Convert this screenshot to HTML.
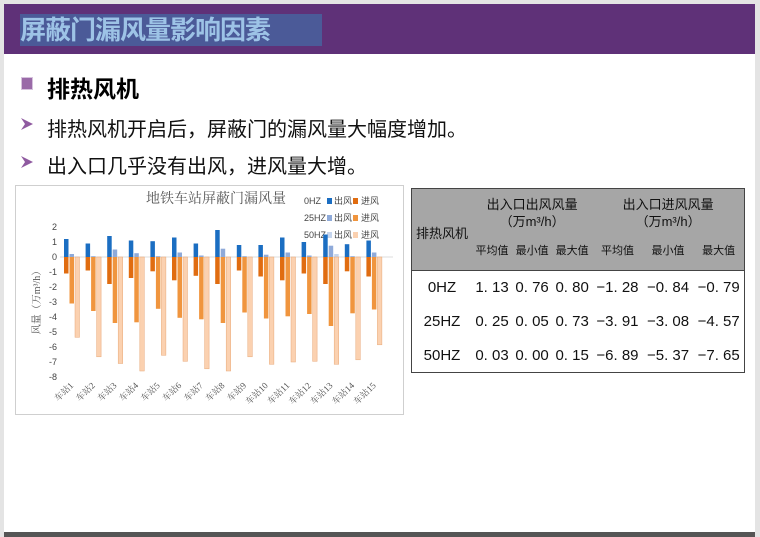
<!DOCTYPE html>
<html><head><meta charset="utf-8"><style>
body{margin:0;width:760px;height:537px;background:#e4e4e4;position:relative;overflow:hidden;font-family:"Liberation Sans","Noto Sans CJK SC",sans-serif}
.slide{position:absolute;left:4px;top:4px;width:751px;height:533px;background:#fff}
.hdr{position:absolute;left:4px;top:4px;width:751px;height:50px;background:#5f3178}
.ttl{position:absolute;left:20px;top:14px;width:302px;height:32px;background:#4b5a98;color:#9dc3e6;font-size:26px;font-weight:bold;line-height:32px;letter-spacing:-1px;white-space:nowrap}
.bar{position:absolute;left:4px;top:532px;width:751px;height:5px;background:#555}
.t{position:absolute;white-space:nowrap;color:#111}
table{position:absolute;left:411px;top:188px;width:334px;height:184px;border-collapse:collapse;border:1.5px solid #444;font-family:"Liberation Sans","Noto Sans CJK SC",sans-serif}
td{text-align:center;padding:0;white-space:nowrap;color:#111}
</style></head><body>
<div class="slide"></div>
<div class="hdr"></div>
<div class="ttl">屏蔽门漏风量影响因素</div>
<div class="bar"></div>
<div style="position:absolute;left:21px;top:77px;width:10px;height:11px;background:#9a6aa8;border:1.5px solid #d6c3dd"></div>
<div class="t" style="left:47px;top:70px;font-size:23px;font-weight:bold;color:#000">排热风机</div>
<svg style="position:absolute;left:20px;top:116px" width="14" height="16"><path d="M1 2 L13 8 L1 14 L5 8 Z" fill="#8f5aa0"/></svg>
<div class="t" style="left:47px;top:113px;font-size:20px">排热风机开启后，屏蔽门的漏风量大幅度增加。</div>
<svg style="position:absolute;left:20px;top:154px" width="14" height="16"><path d="M1 2 L13 8 L1 14 L5 8 Z" fill="#8f5aa0"/></svg>
<div class="t" style="left:47px;top:150px;font-size:20px">出入口几乎没有出风，进风量大增。</div>

<svg style="position:absolute;left:0;top:0" width="760" height="537" font-family="Liberation Serif,Noto Serif CJK SC,serif">
<rect x="15.5" y="185.5" width="388" height="229" fill="#fff" stroke="#cfcfcf"/>
<text x="216" y="203" font-size="14" text-anchor="middle" fill="#555">地铁车站屏蔽门漏风量</text>
<g font-size="9" fill="#444" font-family="Liberation Sans,Noto Sans CJK SC,sans-serif">
<text x="304" y="204">0HZ</text><rect x="327" y="198" width="5" height="6" fill="#1b6ec2"/><text x="334" y="204">出风</text><rect x="353" y="198" width="5" height="6" fill="#e06c10"/><text x="361" y="204">进风</text>
<text x="304" y="221">25HZ</text><rect x="327" y="215" width="5" height="6" fill="#8faad9"/><text x="334" y="221">出风</text><rect x="353" y="215" width="5" height="6" fill="#f0953e"/><text x="361" y="221">进风</text>
<text x="304" y="238">50HZ</text><rect x="327" y="232" width="5" height="6" fill="#c5d5ee"/><text x="334" y="238">出风</text><rect x="353" y="232" width="5" height="6" fill="#fbd1b0"/><text x="361" y="238">进风</text>
</g>
<g font-size="9" fill="#444" text-anchor="end" font-family="Liberation Sans,sans-serif">
<text x="57" y="230">2</text><text x="57" y="245">1</text><text x="57" y="260">0</text><text x="57" y="275">-1</text><text x="57" y="290">-2</text><text x="57" y="305">-3</text><text x="57" y="320">-4</text><text x="57" y="335">-5</text><text x="57" y="350">-6</text><text x="57" y="365">-7</text><text x="57" y="380">-8</text>
</g>
<text transform="translate(40,300) rotate(-90)" font-size="10" fill="#555" text-anchor="middle">风量（万m³/h）</text>
<line x1="60" y1="257" x2="393" y2="257" stroke="#ddd"/>
<g id="bars">
<g transform="translate(64,0)"><rect x="0" y="239" width="4.5" height="18" fill="#1b6ec2"/><rect x="0" y="257" width="4.5" height="16.5" fill="#e06c10"/><rect x="5.5" y="254" width="4.5" height="3" fill="#8faad9"/><rect x="5.5" y="257" width="4.5" height="46.5" fill="#f0953e"/><rect x="11" y="256.5" width="4.5" height="0.5" fill="#c5d5ee"/><rect x="11" y="257" width="4.5" height="80.3" fill="#fbd1b0" stroke="#e8a878" stroke-width=".5"/></g>
<g transform="translate(85.6,0)"><rect x="0" y="243.5" width="4.5" height="13.5" fill="#1b6ec2"/><rect x="0" y="257" width="4.5" height="13.5" fill="#e06c10"/><rect x="5.5" y="256.2" width="4.5" height="0.8" fill="#8faad9"/><rect x="5.5" y="257" width="4.5" height="54" fill="#f0953e"/><rect x="11" y="257" width="4.5" height="99.8" fill="#fbd1b0" stroke="#e8a878" stroke-width=".5"/></g>
<g transform="translate(107.2,0)"><rect x="0" y="236" width="4.5" height="21" fill="#1b6ec2"/><rect x="0" y="257" width="4.5" height="27" fill="#e06c10"/><rect x="5.5" y="249.5" width="4.5" height="7.5" fill="#8faad9"/><rect x="5.5" y="257" width="4.5" height="66" fill="#f0953e"/><rect x="11" y="257" width="4.5" height="106.5" fill="#fbd1b0" stroke="#e8a878" stroke-width=".5"/></g>
<g transform="translate(128.8,0)"><rect x="0" y="240.5" width="4.5" height="16.5" fill="#1b6ec2"/><rect x="0" y="257" width="4.5" height="21" fill="#e06c10"/><rect x="5.5" y="253.2" width="4.5" height="3.8" fill="#8faad9"/><rect x="5.5" y="257" width="4.5" height="65.3" fill="#f0953e"/><rect x="11" y="257" width="4.5" height="114" fill="#fbd1b0" stroke="#e8a878" stroke-width=".5"/></g>
<g transform="translate(150.4,0)"><rect x="0" y="241.2" width="4.5" height="15.8" fill="#1b6ec2"/><rect x="0" y="257" width="4.5" height="14.3" fill="#e06c10"/><rect x="5.5" y="256.2" width="4.5" height="0.8" fill="#8faad9"/><rect x="5.5" y="257" width="4.5" height="51.8" fill="#f0953e"/><rect x="11" y="257" width="4.5" height="98.3" fill="#fbd1b0" stroke="#e8a878" stroke-width=".5"/></g>
<g transform="translate(172,0)"><rect x="0" y="237.5" width="4.5" height="19.5" fill="#1b6ec2"/><rect x="0" y="257" width="4.5" height="23.3" fill="#e06c10"/><rect x="5.5" y="252.5" width="4.5" height="4.5" fill="#8faad9"/><rect x="5.5" y="257" width="4.5" height="60.8" fill="#f0953e"/><rect x="11" y="257" width="4.5" height="104.3" fill="#fbd1b0" stroke="#e8a878" stroke-width=".5"/></g>
<g transform="translate(193.6,0)"><rect x="0" y="243.5" width="4.5" height="13.5" fill="#1b6ec2"/><rect x="0" y="257" width="4.5" height="18.8" fill="#e06c10"/><rect x="5.5" y="255.5" width="4.5" height="1.5" fill="#8faad9"/><rect x="5.5" y="257" width="4.5" height="62.3" fill="#f0953e"/><rect x="11" y="257" width="4.5" height="111.8" fill="#fbd1b0" stroke="#e8a878" stroke-width=".5"/></g>
<g transform="translate(215.2,0)"><rect x="0" y="230" width="4.5" height="27" fill="#1b6ec2"/><rect x="0" y="257" width="4.5" height="27" fill="#e06c10"/><rect x="5.5" y="248.7" width="4.5" height="8.3" fill="#8faad9"/><rect x="5.5" y="257" width="4.5" height="66" fill="#f0953e"/><rect x="11" y="257" width="4.5" height="114" fill="#fbd1b0" stroke="#e8a878" stroke-width=".5"/></g>
<g transform="translate(236.8,0)"><rect x="0" y="245" width="4.5" height="12" fill="#1b6ec2"/><rect x="0" y="257" width="4.5" height="13.5" fill="#e06c10"/><rect x="5.5" y="256.2" width="4.5" height="0.8" fill="#8faad9"/><rect x="5.5" y="257" width="4.5" height="55.5" fill="#f0953e"/><rect x="11" y="257" width="4.5" height="99.8" fill="#fbd1b0" stroke="#e8a878" stroke-width=".5"/></g>
<g transform="translate(258.4,0)"><rect x="0" y="245" width="4.5" height="12" fill="#1b6ec2"/><rect x="0" y="257" width="4.5" height="19.5" fill="#e06c10"/><rect x="5.5" y="254.7" width="4.5" height="2.3" fill="#8faad9"/><rect x="5.5" y="257" width="4.5" height="61.5" fill="#f0953e"/><rect x="11" y="257" width="4.5" height="107.3" fill="#fbd1b0" stroke="#e8a878" stroke-width=".5"/></g>
<g transform="translate(280,0)"><rect x="0" y="237.5" width="4.5" height="19.5" fill="#1b6ec2"/><rect x="0" y="257" width="4.5" height="23.3" fill="#e06c10"/><rect x="5.5" y="252.5" width="4.5" height="4.5" fill="#8faad9"/><rect x="5.5" y="257" width="4.5" height="59.3" fill="#f0953e"/><rect x="11" y="257" width="4.5" height="105" fill="#fbd1b0" stroke="#e8a878" stroke-width=".5"/></g>
<g transform="translate(301.6,0)"><rect x="0" y="242" width="4.5" height="15" fill="#1b6ec2"/><rect x="0" y="257" width="4.5" height="16.5" fill="#e06c10"/><rect x="5.5" y="255.5" width="4.5" height="1.5" fill="#8faad9"/><rect x="5.5" y="257" width="4.5" height="57" fill="#f0953e"/><rect x="11" y="257" width="4.5" height="104.3" fill="#fbd1b0" stroke="#e8a878" stroke-width=".5"/></g>
<g transform="translate(323.2,0)"><rect x="0" y="234.5" width="4.5" height="22.5" fill="#1b6ec2"/><rect x="0" y="257" width="4.5" height="27" fill="#e06c10"/><rect x="5.5" y="245.7" width="4.5" height="11.3" fill="#8faad9"/><rect x="5.5" y="257" width="4.5" height="69" fill="#f0953e"/><rect x="11" y="254" width="4.5" height="3" fill="#c5d5ee"/><rect x="11" y="257" width="4.5" height="107.3" fill="#fbd1b0" stroke="#e8a878" stroke-width=".5"/></g>
<g transform="translate(344.8,0)"><rect x="0" y="244.2" width="4.5" height="12.8" fill="#1b6ec2"/><rect x="0" y="257" width="4.5" height="14.3" fill="#e06c10"/><rect x="5.5" y="256.2" width="4.5" height="0.8" fill="#8faad9"/><rect x="5.5" y="257" width="4.5" height="56.3" fill="#f0953e"/><rect x="11" y="257" width="4.5" height="102.8" fill="#fbd1b0" stroke="#e8a878" stroke-width=".5"/></g>
<g transform="translate(366.4,0)"><rect x="0" y="240.5" width="4.5" height="16.5" fill="#1b6ec2"/><rect x="0" y="257" width="4.5" height="19.5" fill="#e06c10"/><rect x="5.5" y="252.5" width="4.5" height="4.5" fill="#8faad9"/><rect x="5.5" y="257" width="4.5" height="52.5" fill="#f0953e"/><rect x="11" y="257" width="4.5" height="87.8" fill="#fbd1b0" stroke="#e8a878" stroke-width=".5"/></g>
</g>
<g font-size="9" fill="#555" text-anchor="end">
<text transform="translate(74,386) rotate(-45)">车站1</text>
<text transform="translate(95.6,386) rotate(-45)">车站2</text>
<text transform="translate(117.2,386) rotate(-45)">车站3</text>
<text transform="translate(138.8,386) rotate(-45)">车站4</text>
<text transform="translate(160.4,386) rotate(-45)">车站5</text>
<text transform="translate(182,386) rotate(-45)">车站6</text>
<text transform="translate(203.6,386) rotate(-45)">车站7</text>
<text transform="translate(225.2,386) rotate(-45)">车站8</text>
<text transform="translate(246.8,386) rotate(-45)">车站9</text>
<text transform="translate(268.4,386) rotate(-45)">车站10</text>
<text transform="translate(290,386) rotate(-45)">车站11</text>
<text transform="translate(311.6,386) rotate(-45)">车站12</text>
<text transform="translate(333.2,386) rotate(-45)">车站13</text>
<text transform="translate(354.8,386) rotate(-45)">车站14</text>
<text transform="translate(376.4,386) rotate(-45)">车站15</text>
</g>
</svg>

<table>
<tr style="background:#a6a6a6;height:42px"><td rowspan="2" style="font-size:13px;width:60px;padding-top:6px">排热风机</td><td colspan="3" style="font-size:13px;line-height:17px;padding-top:6px">出入口出风风量<br>（万m³/h）</td><td colspan="3" style="font-size:13px;line-height:17px;padding-top:6px">出入口进风风量<br>（万m³/h）</td></tr>
<tr style="background:#a6a6a6;height:40px;border-bottom:1.5px solid #444"><td style="font-size:11px">平均值</td><td style="font-size:11px">最小值</td><td style="font-size:11px">最大值</td><td style="font-size:11px">平均值</td><td style="font-size:11px">最小值</td><td style="font-size:11px">最大值</td></tr>
<tr style="font-size:15px;height:34px"><td>0HZ</td><td>1. 13</td><td>0. 76</td><td>0. 80</td><td>−1. 28</td><td>−0. 84</td><td>−0. 79</td></tr>
<tr style="font-size:15px;height:34px"><td>25HZ</td><td>0. 25</td><td>0. 05</td><td>0. 73</td><td>−3. 91</td><td>−3. 08</td><td>−4. 57</td></tr>
<tr style="font-size:15px;height:34px"><td>50HZ</td><td>0. 03</td><td>0. 00</td><td>0. 15</td><td>−6. 89</td><td>−5. 37</td><td>−7. 65</td></tr>
</table>
</body></html>
